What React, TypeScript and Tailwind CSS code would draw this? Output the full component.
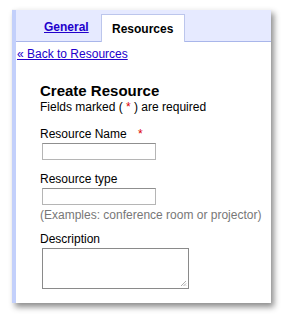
import React from "react";

export default function App() {
  return (
    <div className="w-[283px] h-[320px] bg-white" style={{ fontFamily: '"Liberation Sans", Arial, sans-serif' }}>
      <div className="relative left-[12px] top-[9px] w-[259px] h-[294px] bg-white flex border-t border-[#f4f4f4] shadow-[3px_4px_6px_rgba(0,0,0,0.45)]">
        <div className="w-[4px] bg-[#c3d0fb] shrink-0" />
        <div className="flex-1 flex flex-col">
          <div className="h-[32px] bg-[#e6eaff] border-b border-[#a9b6ea] flex items-end pl-[28px] shrink-0">
            <a className="text-[12px] font-bold text-[#2200cc] underline mb-[7px] leading-[14px]">General</a>
            <div className="ml-[12px] w-[84px] h-[28px] -mb-px bg-white border border-b-0 border-[#bcc6ec] flex items-center justify-center text-[12px] font-bold text-black">
              Resources
            </div>
          </div>
          <div className="pl-px pt-[5px]">
            <a className="text-[12px] leading-[14px] text-[#2200cc] underline block">« Back to Resources</a>
          </div>
          <div className="pl-[24px] pt-[21px] text-[12px] text-black leading-[14px]">
            <div className="text-[15px] font-bold leading-[17px]">Create Resource</div>
            <div className="mt-[1px]">Fields marked ( <span className="text-[#dd0000]">*</span> ) are required</div>
            <div className="mt-[13px]">Resource Name <span className="text-[#dd0000] ml-[8px]">*</span></div>
            <div className="mt-[2px] ml-[2px] w-[114px] h-[17px] border border-[#b5b5b5] border-t-[#8f8f8f]" />
            <div className="mt-[12px]">Resource type</div>
            <div className="mt-[2px] ml-[2px] w-[114px] h-[17px] border border-[#b5b5b5] border-t-[#8f8f8f]" />
            <div className="mt-[3px] text-[#777777]">(Examples: conference room or projector)</div>
            <div className="mt-[10px]">Description</div>
            <div className="relative mt-[2px] ml-[2px] w-[147px] h-[41px] border border-[#8a8a8a]">
              <svg className="absolute right-[1px] bottom-[1px]" width="7" height="7" viewBox="0 0 7 7">
                <path d="M6 1 L1 6 M6 3.5 L3.5 6 M6 5.5 L5.5 6" stroke="#999" strokeWidth="0.8" />
              </svg>
            </div>
          </div>
        </div>
      </div>
    </div>
  );
}
